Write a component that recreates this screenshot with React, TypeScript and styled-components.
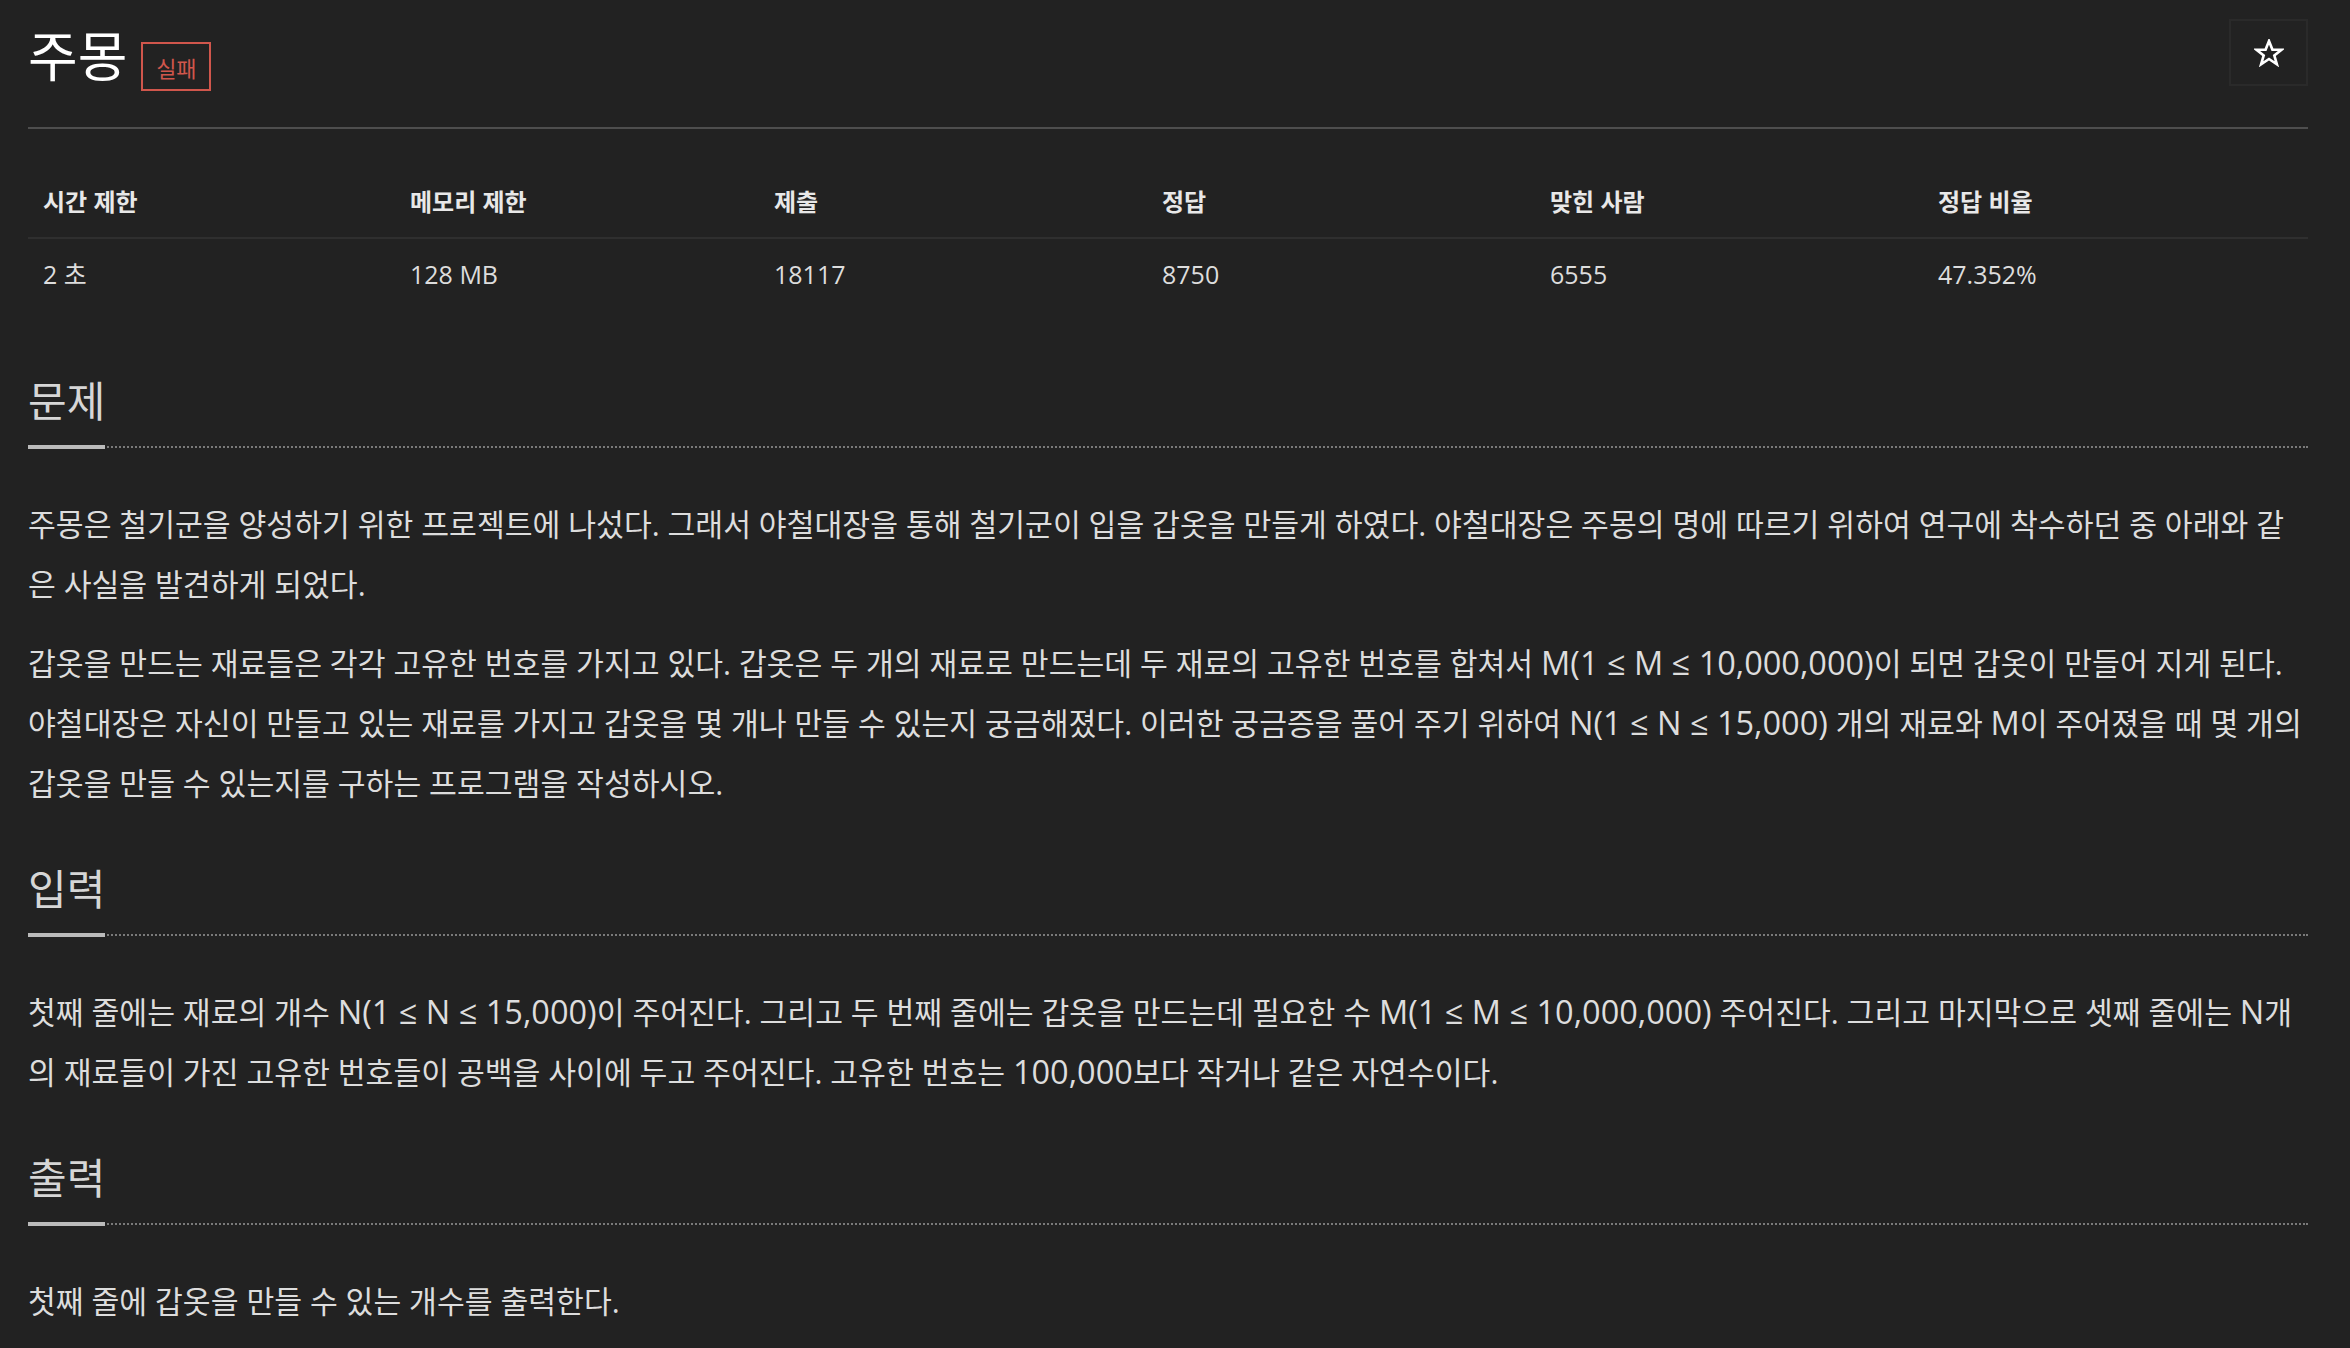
import React from "react";
import styled, { createGlobalStyle } from "styled-components";

const Global = createGlobalStyle`
  html, body { margin: 0; padding: 0; background: #222222; }
  body { font-family: "Open Sans", "Noto Sans CJK KR", sans-serif; color: #dddddd; }
`;

const Page = styled.div`
  display: flex;
  flex-direction: column;
  padding: 0 42px 40px 28px;
`;

const Header = styled.header`
  display: flex;
  align-items: flex-start;
  padding: 19px 0 34px;
  border-bottom: 2px solid #4e4e4e;
`;

const Title = styled.h1`
  margin: 0;
  font-size: 54px;
  line-height: 74px;
  font-weight: 400;
  color: #ffffff;
`;

const Badge = styled.span`
  margin: 23px 0 0 14px;
  box-sizing: border-box;
  width: 70px;
  height: 49px;
  border: 2px solid #d0564c;
  color: #d0564c;
  font-size: 22px;
  display: inline-flex;
  align-items: center;
  justify-content: center;
`;

const StarButton = styled.button`
  margin-left: auto;
  width: 79px;
  height: 67px;
  box-sizing: border-box;
  background: #222222;
  border: 2px solid #2a2a2a;
  display: flex;
  align-items: center;
  justify-content: center;
  padding: 0;
`;

const Table = styled.table`
  width: 100%;
  table-layout: fixed;
  border-collapse: collapse;
  margin: 40px 0 18px;
  line-height: 36px;
`;

const Th = styled.th<{ $w: number }>`
  width: ${(p) => p.$w - 30}px;
  text-align: left;
  font-size: 24px;
  font-weight: 700;
  color: #e8e8e8;
  padding: 15px 15px 17px;
  border-bottom: 2px solid #2f2f2f;
`;

const Td = styled.td`
  font-size: 25px;
  color: #dddddd;
  padding: 17px 15px 16px;
`;

const Section = styled.section`
  margin-top: 50px;
`;

const Headline = styled.div`
  display: flex;
  align-items: flex-end;
  border-bottom: 2px dotted #7a7a7a;
`;

const H2 = styled.h2`
  margin: 0 0 -3px;
  font-size: 42px;
  line-height: 50px;
  font-weight: 400;
  color: #d6d6d6;
  padding-bottom: 19px;
  border-bottom: 4px solid #bbbbbb;
`;

const Body = styled.div`
  margin-top: 47px;
`;

const P = styled.p`
  margin: 0 0 19px;
  font-size: 30.25px;
  line-height: 60px;
  color: #dddddd;
  &:last-child { margin-bottom: 0; }
`;

const Latin = styled.span`
  font-size: 32.5px;
  line-height: 1;
`;

const Star = () => (
  <svg width="30" height="28" viewBox="0 0 30 28">
    <polygon
      points="15,2 18.4,10.6 27.5,10.8 20.3,16.4 22.9,25.3 15,20 7.1,25.3 9.7,16.4 2.5,10.8 11.6,10.6"
      fill="none"
      stroke="#ffffff"
      strokeWidth="2.6"
      strokeLinejoin="miter"
    />
  </svg>
);

const cols = [
  { h: "시간 제한", v: "2 초", w: 367 },
  { h: "메모리 제한", v: "128 MB", w: 364 },
  { h: "제출", v: "18117", w: 388 },
  { h: "정답", v: "8750", w: 388 },
  { h: "맞힌 사람", v: "6555", w: 388 },
  { h: "정답 비율", v: "47.352%", w: 385 },
];

export default function App() {
  return (
    <>
      <Global />
      <Page>
        <Header>
          <Title>주몽</Title>
          <Badge>실패</Badge>
          <StarButton aria-label="즐겨찾기">
            <Star />
          </StarButton>
        </Header>
        <Table>
          <thead>
            <tr>
              {cols.map((c) => (
                <Th key={c.h} $w={c.w}>
                  {c.h}
                </Th>
              ))}
            </tr>
          </thead>
          <tbody>
            <tr>
              {cols.map((c) => (
                <Td key={c.h}>{c.v}</Td>
              ))}
            </tr>
          </tbody>
        </Table>
        <Section>
          <Headline>
            <H2>문제</H2>
          </Headline>
          <Body>
            <P>
              주몽은 철기군을 양성하기 위한 프로젝트에 나섰다. 그래서 야철대장을 통해 철기군이 입을 갑옷을 만들게 하였다. 야철대장은 주몽의 명에 따르기 위하여 연구에 착수하던 중 아래와 같은 사실을 발견하게 되었다.
            </P>
            <P>
              갑옷을 만드는 재료들은 각각 고유한 번호를 가지고 있다. 갑옷은 두 개의 재료로 만드는데 두 재료의 고유한 번호를 합쳐서 <Latin>M(1 ≤ M ≤ 10,000,000)</Latin>이 되면 갑옷이 만들어 지게 된다. 야철대장은 자신이 만들고 있는 재료를 가지고 갑옷을 몇 개나 만들 수 있는지 궁금해졌다. 이러한 궁금증을 풀어 주기 위하여 <Latin>N(1 ≤ N ≤ 15,000)</Latin> 개의 재료와 <Latin>M</Latin>이 주어졌을 때 몇 개의 갑옷을 만들 수 있는지를 구하는 프로그램을 작성하시오.
            </P>
          </Body>
        </Section>
        <Section>
          <Headline>
            <H2>입력</H2>
          </Headline>
          <Body>
            <P>
              첫째 줄에는 재료의 개수 <Latin>N(1 ≤ N ≤ 15,000)</Latin>이 주어진다. 그리고 두 번째 줄에는 갑옷을 만드는데 필요한 수 <Latin>M(1 ≤ M ≤ 10,000,000)</Latin> 주어진다. 그리고 마지막으로 셋째 줄에는 <Latin>N</Latin>개의 재료들이 가진 고유한 번호들이 공백을 사이에 두고 주어진다. 고유한 번호는 <Latin>100,000</Latin>보다 작거나 같은 자연수이다.
            </P>
          </Body>
        </Section>
        <Section>
          <Headline>
            <H2>출력</H2>
          </Headline>
          <Body>
            <P>첫째 줄에 갑옷을 만들 수 있는 개수를 출력한다.</P>
          </Body>
        </Section>
      </Page>
    </>
  );
}
